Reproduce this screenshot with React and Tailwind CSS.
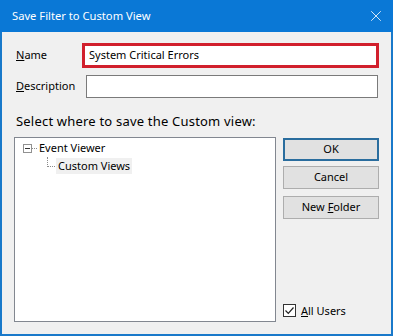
import { X } from 'lucide-react';

const font = { fontFamily: '"Noto Sans", "Open Sans", sans-serif' };

const Button = ({ children, primary }) => (
  <div
    className={`h-[23px] flex items-center justify-center bg-[#e1e1e1] text-[11px] text-black ${
      primary ? 'border-2 border-[#2a6d9e]' : 'border border-[#adadad]'
    }`}
  >
    {children}
  </div>
);

const App = () => {
  return (
    <div className="w-[393px] h-[336px] bg-[#1979ca] flex flex-col" style={font}>
      {/* title bar */}
      <div className="h-[32px] flex items-center justify-between pl-[12px] pr-[8px] bg-[#0a78d6]">
        <span className="text-white text-[11.2px]">Save Filter to Custom View</span>
        <X size={18} strokeWidth={1.3} className="text-[#dbe9f7]" />
      </div>

      <div className="flex-1 mx-[2px] mb-[2px] bg-[#f0f0f0] flex flex-col pl-[12px] pr-[12px] pt-[10px] pb-[12px]">
        <div className="flex items-center h-[25px] mt-[1px]">
          <span className="ml-[2px] w-[66px] text-[11px] text-black">
            <u>N</u>ame
          </span>
          <div className="flex-1 h-[25px] border-[3px] border-[#d11f2c] bg-white flex items-center pl-[4px] text-[11px] text-black">
            System Critical Errors
          </div>
        </div>

        <div className="flex items-center h-[23px] mt-[7px]">
          <span className="ml-[2px] w-[70px] text-[11px] text-black">
            <u>D</u>escription
          </span>
          <div className="flex-1 h-[23px] border border-[#7a7a7a] bg-white mr-[1px]" />
        </div>

        <div className="ml-[2px] mt-[14px] text-[13px] tracking-[0.2px] leading-[18px] text-black">
          Select where to save the Custom view:
        </div>

        <div className="flex flex-1 mt-[7px] gap-[7px]">
          {/* tree */}
          <div className="w-[262px] border border-[#828790] bg-white pt-[1px] pl-[8px]">
            <div className="flex items-center h-[18px]">
              <div className="w-[9px] h-[9px] border border-[#919191] flex items-center justify-center">
                <div className="w-[5px] h-px bg-[#333]" />
              </div>
              <div className="w-[5px] border-t border-dotted border-[#8c8c8c]" />
              <span className="ml-[2px] text-[11px] text-black">Event Viewer</span>
            </div>
            <div className="flex items-center h-[18px]">
              <div className="ml-[24px] w-[8px] h-[10px] border-l border-b border-dotted border-[#8c8c8c] -mt-[9px]" />
              <span className="ml-[1px] px-[2px] text-[11px] text-black bg-[#f0f0f0]">Custom Views</span>
            </div>
          </div>

          {/* buttons */}
          <div className="flex-1 flex flex-col pt-[1px]">
            <Button primary>OK</Button>
            <div className="mt-[5px]">
              <Button>Cancel</Button>
            </div>
            <div className="mt-[7px]">
              <Button>
                New <u className="ml-[3px]">F</u>older
              </Button>
            </div>
            <div className="flex-1" />
            <div className="flex items-center gap-[5px] mb-[3px]">
              <div className="w-[13px] h-[13px] border border-[#333] bg-white flex items-center justify-center">
                <svg width="11" height="11" viewBox="0 0 11 11" fill="none">
                  <path d="M1.5 5.5 L4.3 8.3 L9.5 2.5" stroke="#222" strokeWidth="1.2" />
                </svg>
              </div>
              <span className="text-[11px] text-black">
                <u>A</u>ll Users
              </span>
            </div>
          </div>
        </div>
      </div>
    </div>
  );
};

export default App;
